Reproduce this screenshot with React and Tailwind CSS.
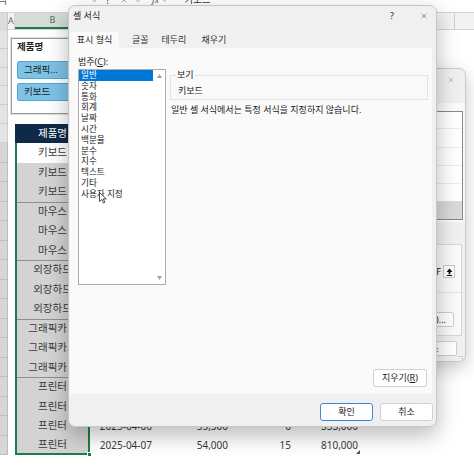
import React from "react";
import { X, Check, ChevronDown, EllipsisVertical } from "lucide-react";

const products = [
  "키보드", "키보드", "키보드",
  "마우스", "마우스", "마우스",
  "외장하드", "외장하드", "외장하드",
  "그래픽카드", "그래픽카드", "그래픽카드",
  "프린터", "프린터", "프린터", "프린터",
];

const data = [
  ["2025-04-01", "45,000", "12", "540,000"],
  ["2025-04-03", "45,000", "8", "360,000"],
  ["2025-04-05", "46,000", "10", "460,000"],
  ["2025-04-01", "25,000", "20", "500,000"],
  ["2025-04-02", "25,000", "14", "350,000"],
  ["2025-04-04", "26,000", "9", "234,000"],
  ["2025-04-02", "89,000", "5", "445,000"],
  ["2025-04-03", "89,000", "7", "623,000"],
  ["2025-04-06", "92,000", "4", "368,000"],
  ["2025-04-01", "450,000", "2", "900,000"],
  ["2025-04-04", "450,000", "3", "1,350,000"],
  ["2025-04-07", "460,000", "1", "460,000"],
  ["2025-04-02", "52,000", "6", "312,000"],
  ["2025-04-05", "53,000", "10", "530,000"],
  ["2025-04-06", "55,500", "6", "333,000"],
  ["2025-04-07", "54,000", "15", "810,000"],
];

const categories = ["일반", "숫자", "통화", "회계", "날짜", "시간", "백분율", "분수", "지수", "텍스트", "기타", "사용자 지정"];

function Sheet() {
  return (
    <div className="flex flex-col">
      {/* formula bar (mostly cut off at top) */}
      <div className="h-[12px] overflow-hidden">
        <div className="-mt-[6px] h-[12px] flex items-center text-[#5a5a5a]">
          <span className="-ml-[2px] w-[10px] text-[10px] leading-[12px]">식</span>
          <ChevronDown className="ml-[82px] w-[9px] h-[9px]" strokeWidth={1.5} />
          <EllipsisVertical className="ml-[4px] w-[9px] h-[9px]" strokeWidth={1.5} />
          <X className="ml-[8px] w-[8px] h-[8px]" strokeWidth={1.5} />
          <Check className="ml-[7px] w-[8px] h-[8px]" strokeWidth={1.5} />
          <span className="ml-[9px] text-[9px] italic leading-[12px]">fx</span>
          <ChevronDown className="ml-[2px] w-[7px] h-[7px]" strokeWidth={1.5} />
          <span className="ml-[16px] text-[9.5px] leading-[12px] text-[#333]">키보드</span>
        </div>
      </div>

      {/* column headers */}
      <div className="h-[18px] flex bg-[#f3f3f3] border-t border-b border-[#d4d4d4] text-[9px] text-[#666]">
        <div className="w-[8px] shrink-0 bg-[#dcdcdc] border-r border-[#c8c8c8]" />
        <div className="w-[7px] shrink-0 flex items-center justify-center border-r border-[#d8d8d8]">A</div>
        <div className="w-[75px] shrink-0 flex items-center justify-center bg-[#d5ddd8] border-b-2 border-[#1e7d46] text-[#4d6b58]">B</div>
        <div className="w-[65px] shrink-0 flex items-center justify-center border-r border-[#d8d8d8]">C</div>
        <div className="w-[76px] shrink-0 flex items-center justify-center border-r border-[#d8d8d8]">D</div>
        <div className="w-[63px] shrink-0 flex items-center justify-center border-r border-[#d8d8d8]">E</div>
        <div className="w-[67px] shrink-0 flex items-center justify-center border-r border-[#d8d8d8]">F</div>
        <div className="w-[94px] shrink-0 flex items-center justify-center border-r border-[#cfcfcf]">G</div>
        <div className="flex-1" />
      </div>

      {/* rows above the table */}
      {[0, 1, 2, 3, 4].map((i) => (
        <div key={i} className="flex h-[18.8px]">
          <div className="w-[8px] shrink-0 bg-[#e4e4e4] border-b border-r border-[#cdcdcd]" />
          <div className="flex-1" />
        </div>
      ))}

      {/* table header */}
      <div className="flex h-[19.5px]">
        <div className="w-[8px] shrink-0 bg-[#e4e4e4] border-b border-r border-[#cdcdcd]" />
        <div className="w-[7px] shrink-0" />
        <div className="w-[75px] shrink-0 flex items-center justify-center bg-[#0f2a47] text-white text-[10.5px]">제품명</div>
        <div className="w-[65px] shrink-0 flex items-center justify-end pr-[3px] bg-[#0f2a47] text-white text-[10px]">날짜</div>
        <div className="w-[76px] shrink-0 flex items-center justify-end pr-[3px] bg-[#0f2a47] text-white text-[10px]">단가</div>
        <div className="w-[63px] shrink-0 flex items-center justify-end pr-[3px] bg-[#0f2a47] text-white text-[10px]">수량</div>
        <div className="w-[67px] shrink-0 flex items-center justify-end pr-[3px] bg-[#0f2a47] text-white text-[10px]">금액</div>
        <div className="flex-1" />
      </div>

      {/* table rows */}
      {products.map((p, i) => {
        const active = i === 0;
        const last = i === 15;
        const groupStart = i === 3 || i === 6 || i === 9 || i === 12;
        const d = data[i];
        return (
          <div key={i} className="flex h-[19.5px] text-[#3a3a3a]">
            <div className="w-[8px] shrink-0 bg-[#d6d6d6] border-b border-r border-[#bdbdbd]" />
            <div className="w-[7px] shrink-0" />
            <div
              className={
                "relative w-[75px] shrink-0 flex items-center justify-center border-l-2 border-r-2 border-[#1e7d46] text-[10.5px] " +
                (active ? "bg-white " : "bg-[#d3d3d3] ") +
                (last ? "border-b-2 " : "") +
                (groupStart ? "shadow-[inset_0_1px_0_#8f8f8f]" : "")
              }
            >
              {p}
              {last && <span className="absolute -right-[4px] -bottom-[4px] w-[5px] h-[5px] bg-[#1e7d46] border border-white" />}
            </div>
            <div className="w-[65px] shrink-0 flex items-center justify-end pr-[3px] text-[10px]">{d[0]}</div>
            <div className="w-[76px] shrink-0 flex items-center justify-end pr-[3px] text-[10px]">{d[1]}</div>
            <div className="w-[63px] shrink-0 flex items-center justify-end pr-[3px] text-[10px]">{d[2]}</div>
            <div className="relative w-[67px] shrink-0 flex items-center justify-end pr-[3px] text-[10px]">
              {d[3]}
              {last && (
                <svg className="absolute right-[1px] bottom-[1px]" width="4" height="4" viewBox="0 0 4 4">
                  <path d="M4 0 L4 4 L0 4 Z" fill="#3b5b7a" />
                </svg>
              )}
            </div>
            <div className="flex-1" />
          </div>
        );
      })}
    </div>
  );
}

function Slicer() {
  return (
    <div className="absolute left-[11px] top-[38px] w-[130px] h-[76px] bg-white border border-[#9c9c9c] shadow-[0_0_0_1px_#dedede] px-[5px] pt-[2px] text-[#222]">
      <div className="text-[9.5px] font-bold leading-[12px] h-[12px]">제품명</div>
      <div className="mt-[8px] flex flex-col gap-[4px]">
        <div className="h-[18px] w-[112px] bg-[#7dc3e7] border border-[#58a4cf] rounded-[2px] pl-[6px] text-[9.5px] leading-[16px]">그래픽...</div>
        <div className="h-[18px] w-[112px] bg-[#7dc3e7] border border-[#58a4cf] rounded-[2px] pl-[6px] text-[9.5px] leading-[16px]">키보드</div>
      </div>
    </div>
  );
}

function BackDialog() {
  return (
    <div className="absolute left-[296px] top-[68px] w-[170px] h-[294px] bg-[#f0f0f0] border border-[#c9c9c9] rounded-[7px] shadow-[0_6px_18px_rgba(0,0,0,0.22)] flex flex-col items-end overflow-hidden text-[9px] text-[#222]">
      <div className="h-[34px] w-full shrink-0 flex justify-end items-start pt-[7px] pr-[10px] text-[#777]">
        <X className="w-[8px] h-[8px]" strokeWidth={1.3} />
      </div>
      <div className="w-full shrink-0 bg-[#fafafa] flex flex-col items-end pt-[8px] pb-[2px]">
        <div className="mr-[2px] w-[150px] h-[109px] border border-[#7e8a95] bg-white flex flex-col">
          <div className="h-[17px] border-b border-[#ececec]" />
          <div className="h-[19px] border-b border-[#ececec]" />
          <div className="h-[18px] border-b border-[#ececec]" />
          <div className="h-[18px] border-b border-[#ececec]" />
          <div className="h-[17px]" />
          <div className="flex-1 bg-[#d9d9d9]" />
        </div>
      </div>
      <div className="mt-[22px] mr-[3px] shrink-0 w-[150px] h-[92px] border border-[#d6d6d6] bg-[#fafafa] flex flex-col">
        <div className="h-[48px] border-b border-[#e2e2e2] flex items-start justify-end pt-[20px] pr-[6px]">
          <span className="mr-[2px] leading-[13px]">F</span>
          <div className="w-[12px] h-[13px] border border-[#c9c9c9] bg-white flex items-center justify-center">
            <svg width="7" height="8" viewBox="0 0 7 8">
              <path d="M3.5 0.5 L6.5 4 L4.4 4 L4.4 6.2 L2.6 6.2 L2.6 4 L0.5 4 Z" fill="#111" />
              <rect x="0.8" y="7" width="5.4" height="1" fill="#111" />
            </svg>
          </div>
        </div>
        <div className="flex justify-end pt-[19px] pr-[7px]">
          <div className="h-[15px] px-[7px] border border-[#cfcfcf] bg-white rounded-[2px] leading-[13px]">가져오기(O)...</div>
        </div>
      </div>
      <div className="mt-[5px] mr-[8px] shrink-0 w-[53px] h-[15px] border border-[#cfcfcf] bg-white rounded-[2px] flex items-center justify-center">취소</div>
      <div className="mt-auto mb-[2px] mr-[2px] w-[5px] h-[5px] grid grid-cols-2 gap-[1px]">
        <span className="bg-[#c4c4c4]" /><span className="bg-[#c4c4c4]" />
        <span className="bg-transparent" /><span className="bg-[#c4c4c4]" />
      </div>
    </div>
  );
}

function FormatDialog() {
  return (
    <div className="absolute left-[68px] top-[5px] w-[369px] h-[422px] bg-[#f0f0f0] border border-[#c6c6c6] rounded-[7px] shadow-[0_8px_22px_rgba(0,0,0,0.28)] flex flex-col overflow-hidden text-[9px] text-[#1b1b1b]">
      {/* title bar */}
      <div className="h-[20px] shrink-0 flex items-center pl-[4px] pr-[8px]">
        <span className="leading-[10px]">셀 서식</span>
        <span className="ml-auto mr-[26px] text-[9px] leading-[10px]">?</span>
        <X className="w-[8px] h-[8px]" strokeWidth={1.4} />
      </div>
      {/* tabs */}
      <div className="h-[22px] shrink-0 flex items-end pl-[1px]">
        <div className="w-[49px] h-[16px] bg-[#fafafa] rounded-t-[3px] flex items-center justify-center leading-[10px]">표시 형식</div>
        <div className="h-[16px] ml-[13px] flex items-center leading-[10px] text-[#333]">글꼴</div>
        <div className="h-[16px] ml-[13px] flex items-center leading-[10px] text-[#333]">테두리</div>
        <div className="h-[16px] ml-[15px] flex items-center leading-[10px] text-[#333]">채우기</div>
      </div>
      {/* content panel */}
      <div className="flex-1 ml-[1px] mr-[4px] bg-[#fafafa] flex flex-col">
        <div className="flex pt-[7px] pl-[8px]">
          <div className="flex flex-col">
            <div className="leading-[14px] h-[14px]">
              범주(<span className="underline">C</span>):
            </div>
            <div className="relative w-[88px] h-[216px] border border-[#adadad] bg-white flex">
              <div className="flex-1 flex flex-col">
                {categories.map((c, i) => (
                  <div
                    key={c}
                    className={
                      "h-[10.8px] leading-[10.8px] pl-[2px] text-[8.6px] " +
                      (i === 0 ? "bg-[#0078d7] text-white" : "")
                    }
                  >
                    {c}
                  </div>
                ))}
              </div>
              <div className="w-[12px] shrink-0 flex flex-col items-center justify-between pt-[4px] pb-[4px]">
                <svg width="5" height="4" viewBox="0 0 5 4"><path d="M2.5 0 L5 4 L0 4 Z" fill="#a3a3a3" /></svg>
                <svg width="5" height="4" viewBox="0 0 5 4"><path d="M0 0 L5 0 L2.5 4 Z" fill="#a3a3a3" /></svg>
              </div>
              <svg className="absolute left-[20px] top-[122px]" width="8" height="12" viewBox="0 0 8 12">
                <path d="M0.5 0.5 L0.5 9.5 L2.8 7.4 L4.4 11 L5.8 10.3 L4.3 6.9 L7.3 6.9 Z" fill="#fff" stroke="#222" strokeWidth="0.8" />
              </svg>
            </div>
          </div>
          <div className="ml-[4px] w-[258px] flex flex-col">
            <div className="relative mt-[20px] h-[25px] border border-[#e2e2e2] pl-[7px] pt-[10px]">
              <span className="absolute -top-[6px] left-[5px] px-[1px] bg-[#fafafa] leading-[10px]">보기</span>
              <div className="leading-[10px]">키보드</div>
            </div>
            <div className="mt-[5px] ml-[1px] leading-[10px]">일반 셀 서식에서는 특정 서식을 지정하지 않습니다.</div>
          </div>
        </div>
        <div className="mt-auto self-end mr-[5px] mb-[7px] w-[54px] h-[18px] border border-[#d0d0d0] bg-white rounded-[3px] flex items-center justify-center leading-[10px]">
          지우기(<span className="underline">R</span>)
        </div>
      </div>
      {/* footer */}
      <div className="h-[32px] shrink-0 flex justify-end items-start pt-[9px] pr-[3px] gap-[7px]">
        <div className="w-[53px] h-[18px] border border-[#3b88d4] bg-white rounded-[3px] flex items-center justify-center leading-[10px]">확인</div>
        <div className="w-[53px] h-[18px] border border-[#d0d0d0] bg-white rounded-[3px] flex items-center justify-center leading-[10px]">취소</div>
      </div>
    </div>
  );
}

export default function App() {
  return (
    <div className="relative w-[474px] h-[475px] overflow-hidden bg-white font-['Noto_Sans','Noto_Sans_CJK_KR',sans-serif] text-[#222]">
      <Sheet />
      <Slicer />
      <BackDialog />
      <FormatDialog />
    </div>
  );
}
